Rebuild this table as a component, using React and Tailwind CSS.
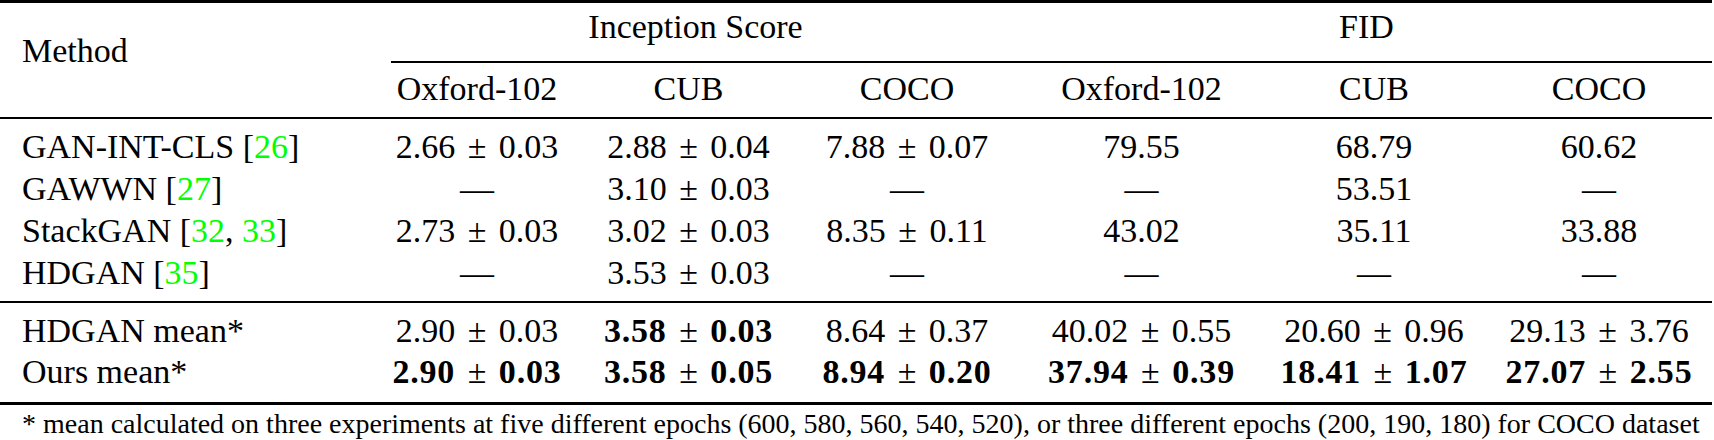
import React from "react";

const G = ({ children }) => <span className="text-[#00ff00]">{children}</span>;

const cols = "grid grid-cols-[370px_214px_209px_228px_241px_224px_226px]";

function Val({ a, b, bold }) {
  if (a === "—") return <span>—</span>;
  if (b === undefined) return <span>{a}</span>;
  const cls = bold ? "font-bold tracking-[0.8px]" : "";
  return (
    <span className="whitespace-pre">
      <span className={cls}>{a}</span>
      <span className="mx-[4px]">{" ± "}</span>
      <span className={cls}>{b}</span>
    </span>
  );
}

const rows1 = [
  { name: <>GAN-INT-CLS [<G>26</G>]</>, v: [["2.66", "0.03"], ["2.88", "0.04"], ["7.88", "0.07"], ["79.55"], ["68.79"], ["60.62"]] },
  { name: <>GAWWN [<G>27</G>]</>, v: [["—"], ["3.10", "0.03"], ["—"], ["—"], ["53.51"], ["—"]] },
  { name: <>StackGAN [<G>32</G>, <G>33</G>]</>, v: [["2.73", "0.03"], ["3.02", "0.03"], ["8.35", "0.11"], ["43.02"], ["35.11"], ["33.88"]] },
  { name: <>HDGAN [<G>35</G>]</>, v: [["—"], ["3.53", "0.03"], ["—"], ["—"], ["—"], ["—"]] },
];

const rows2 = [
  { name: "HDGAN mean*", v: [["2.90", "0.03"], ["3.58", "0.03", true], ["8.64", "0.37"], ["40.02", "0.55"], ["20.60", "0.96"], ["29.13", "3.76"]] },
  { name: "Ours mean*", v: [["2.90", "0.03", true], ["3.58", "0.05", true], ["8.94", "0.20", true], ["37.94", "0.39", true], ["18.41", "1.07", true], ["27.07", "2.55", true]] },
];

function Row({ r, lh }) {
  return (
    <>
      <div className={`pl-[22px] text-left whitespace-nowrap ${lh}`}>{r.name}</div>
      {r.v.map((c, i) => (
        <div key={i} className={`text-center whitespace-nowrap ${lh}`}>
          <Val a={c[0]} b={c[1]} bold={c[2]} />
        </div>
      ))}
    </>
  );
}

export default function App() {
  return (
    <div className="w-[1714px] h-[440px] bg-white text-black [font-family:'Liberation_Serif','Times_New_Roman',serif] text-[34px] leading-[41px] overflow-hidden">
      <div className="w-[1712px]">
        <div className="h-[3px] bg-black" />
        <div className={`${cols} grid-rows-[58px_1.5px_54.5px]`}>
          <div className="row-span-3 pl-[22px] pt-[27px]">Method</div>
          <div className="col-span-3 text-center pt-[3px]">Inception Score</div>
          <div className="col-span-3 text-center pt-[3px]">FID</div>
          <div className="col-span-6 ml-[21px] bg-black" />
          {["Oxford-102", "CUB", "COCO", "Oxford-102", "CUB", "COCO"].map((h, i) => (
            <div key={i} className="text-center pt-[5.5px]">
              {h}
            </div>
          ))}
        </div>
        <div className="h-[1.5px] bg-black" />
        <div className={`${cols} pt-[7px] pb-[7.5px]`}>
          {rows1.map((r, i) => (
            <Row key={i} r={r} lh="leading-[42px]" />
          ))}
        </div>
        <div className="h-[1.5px] bg-black" />
        <div className={`${cols} pt-[7.5px] pb-[10px]`}>
          {rows2.map((r, i) => (
            <Row key={i} r={r} lh="leading-[41px]" />
          ))}
        </div>
        <div className="h-[3px] bg-black" />
        <div className="pl-[22px] mt-[2.5px] text-[28px] leading-[32px] whitespace-nowrap">
          * mean calculated on three experiments at five different epochs (600, 580, 560, 540, 520), or three
          different epochs (200, 190, 180) for COCO dataset
        </div>
      </div>
    </div>
  );
}
